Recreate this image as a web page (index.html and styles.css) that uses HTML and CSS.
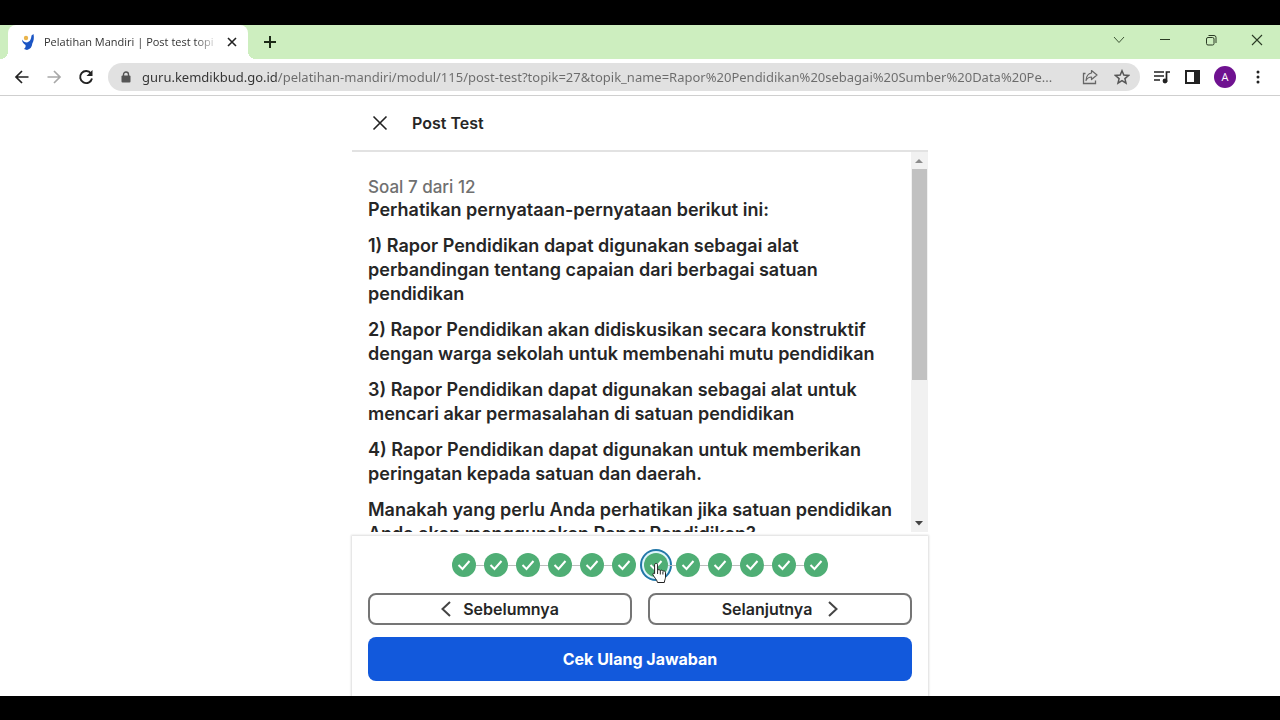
FILE: index.html
```html
<!DOCTYPE html>
<html lang="id">
<head>
<meta charset="utf-8">
<title>Pelatihan Mandiri | Post test topik</title>
<link rel="stylesheet" href="styles.css">
</head>
<body>
<header class="browser">
  <div class="tab-strip">
    <div class="tab">
      <svg class="favicon" width="16" height="18" viewBox="0 0 16 18"><circle cx="6" cy="5" r="2.200" fill="#e9b44c"/><path d="M2 6.500c1 2 3 3 5 3 3-1 4-3 4.500-7L13.500 1c.8 4 .3 7-1.200 9.500-.3 3.500-1.800 5.500-5.300 6.500l-3-1c1-1 2-2 1.500-4C3.500 11 2 9 2 6.500z" fill="#1b55c4"/></svg>
      <span class="tab-title">Pelatihan Mandiri | Post test topi</span>
      <button class="icon-button tab-close" aria-label="Tutup tab"><svg width="10" height="10" viewBox="0 0 10 10"><path d="M1 1l8 8M9 1L1 9" stroke="#222" stroke-width="1.600"/></svg></button>
    </div>
    <button class="icon-button new-tab" aria-label="Tab baru"><svg width="12" height="12" viewBox="0 0 12 12"><path d="M6 0v12M0 6h12" stroke="#1c2a17" stroke-width="2"/></svg></button>
    <div class="window-controls">
      <button class="icon-button" aria-label="Cari tab"><svg width="12" height="12" viewBox="0 0 12 12"><path d="M1 3l5 5.500L11 3" fill="none" stroke="#3d5535"/></svg></button>
      <button class="icon-button" aria-label="Minimalkan"><svg width="12" height="12" viewBox="0 0 12 12"><path d="M1 5.500h10" stroke="#2b3b25"/></svg></button>
      <button class="icon-button" aria-label="Pulihkan"><svg width="12" height="12" viewBox="0 0 12 12"><rect x="1.500" y="3.500" width="7.500" height="7.500" rx="1.500" fill="none" stroke="#2b3b25"/><path d="M3.500 1.500H9a2 2 0 0 1 2 2V9" fill="none" stroke="#2b3b25"/></svg></button>
      <button class="icon-button" aria-label="Tutup"><svg width="12" height="12" viewBox="0 0 12 12"><path d="M1 1l10 10M11 1L1 11" stroke="#2b3b25" stroke-width="1.100"/></svg></button>
    </div>
  </div>
  <div class="toolbar">
    <div class="nav-buttons">
      <button class="icon-button" aria-label="Kembali"><svg width="16" height="16" viewBox="0 0 16 16"><path d="M14.500 8H2.500M8 2L2 8l6 6" fill="none" stroke="#222" stroke-width="1.700"/></svg></button>
      <button class="icon-button" aria-label="Maju"><svg width="16" height="16" viewBox="0 0 16 16"><path d="M1.500 8h12M8 2l6 6-6 6" fill="none" stroke="#a8a8a8" stroke-width="1.700"/></svg></button>
      <button class="icon-button" aria-label="Muat ulang"><svg width="16" height="16" viewBox="0 0 16 16"><path d="M13 4.500A6 6 0 1 0 14 9.500" fill="none" stroke="#222" stroke-width="1.900"/><path d="M14.500 1v6h-6z" fill="#222"/></svg></button>
    </div>
    <div class="omnibox">
      <svg width="10" height="12" viewBox="0 0 10 12"><path d="M2.500 5V3.500a2.500 2.500 0 0 1 5 0V5" fill="none" stroke="#555" stroke-width="1.400"/><rect x="0.500" y="4.500" width="9" height="7" rx="1" fill="#555"/></svg>
      <input class="url" type="text" aria-label="Alamat" value="guru.kemdikbud.go.id/pelatihan-mandiri/modul/115/post-test?topik=27&amp;topik_name=Rapor%20Pendidikan%20sebagai%20Sumber%20Data%20Pe...">
      <button class="icon-button" aria-label="Bagikan"><svg width="16" height="16" viewBox="0 0 16 16"><path d="M3.500 4.500h-2v10h12v-3" fill="none" stroke="#666" stroke-width="1.300"/><path d="M9.500 1.500l5.500 4.500-5.500 4.500V8C7 8 5.300 9 4 11.500 4.300 7.500 6 4.500 9.500 4z" fill="none" stroke="#666" stroke-width="1.200" stroke-linejoin="round"/></svg></button>
      <button class="icon-button" aria-label="Tandai"><svg width="16" height="16" viewBox="0 0 16 16"><path d="M8 1.800l1.800 4.300 4.700.4-3.600 3.100 1.100 4.600-4-2.500-4 2.500 1.100-4.600L1.500 6.500l4.700-.4z" fill="none" stroke="#555" stroke-width="1.500"/></svg></button>
    </div>
    <div class="tool-buttons">
      <button class="icon-button" aria-label="Kontrol media"><svg width="16" height="16" viewBox="0 0 16 16"><path d="M0 3h10M0 7h10M0 11h6M12.500 13V3H16" fill="none" stroke="#222" stroke-width="1.700"/><circle cx="11" cy="12" r="2.400" fill="#222"/></svg></button>
      <button class="icon-button" aria-label="Panel samping"><svg width="16" height="16" viewBox="0 0 16 16"><rect x="2" y="2" width="13" height="12" fill="none" stroke="#222" stroke-width="2"/><path d="M10 2h5v12h-5z" fill="#222"/></svg></button>
      <button class="avatar" aria-label="Profil A">A</button>
      <button class="icon-button" aria-label="Menu"><svg width="16" height="16" viewBox="0 0 16 16"><circle cx="8" cy="3" r="1.500" fill="#222"/><circle cx="8" cy="8" r="1.500" fill="#222"/><circle cx="8" cy="13" r="1.500" fill="#222"/></svg></button>
    </div>
  </div>
</header>
<main class="viewport">
  <div class="card">
    <div class="card-header">
      <button class="icon-button" aria-label="Tutup tes"><svg width="16" height="16" viewBox="0 0 16 16"><path d="M1.500 1.500l13 13M14.500 1.500l-13 13" stroke="#222" stroke-width="1.600"/></svg></button>
      <h1 class="card-title">Post Test</h1>
    </div>
    <div class="card-body">
      <section class="question">
        <div class="counter">Soal 7 dari 12</div>
        <p>Perhatikan pernyataan-pernyataan berikut ini:</p>
        <p>1) Rapor Pendidikan dapat digunakan sebagai alat perbandingan tentang capaian dari berbagai satuan pendidikan</p>
        <p>2) Rapor Pendidikan akan didiskusikan secara konstruktif dengan warga sekolah untuk membenahi mutu pendidikan</p>
        <p>3) Rapor Pendidikan dapat digunakan sebagai alat untuk mencari akar permasalahan di satuan pendidikan</p>
        <p>4) Rapor Pendidikan dapat digunakan untuk memberikan peringatan kepada satuan dan daerah.</p>
        <p>Manakah yang perlu Anda perhatikan jika satuan pendidikan Anda akan menggunakan Rapor Pendidikan?</p>
      </section>
      <div class="scrollbar" aria-hidden="true">
        <svg width="16" height="17" viewBox="0 0 16 17"><path d="M4 11l4-4 4 4z" fill="#8c8c8c"/></svg>
        <div class="track"><div class="thumb"></div></div>
        <svg width="16" height="17" viewBox="0 0 16 17"><path d="M4 6l4 4.500L12 6z" fill="#444"/></svg>
      </div>
    </div>
    <footer class="card-footer">
      <ol class="steps">
        <li class="step"><svg width="24" height="24" viewBox="0 0 24 24"><path d="M6.500 12l4 4 7-8" /></svg></li>
        <li class="step"><svg width="24" height="24" viewBox="0 0 24 24"><path d="M6.500 12l4 4 7-8" /></svg></li>
        <li class="step"><svg width="24" height="24" viewBox="0 0 24 24"><path d="M6.500 12l4 4 7-8" /></svg></li>
        <li class="step"><svg width="24" height="24" viewBox="0 0 24 24"><path d="M6.500 12l4 4 7-8" /></svg></li>
        <li class="step"><svg width="24" height="24" viewBox="0 0 24 24"><path d="M6.500 12l4 4 7-8" /></svg></li>
        <li class="step"><svg width="24" height="24" viewBox="0 0 24 24"><path d="M6.500 12l4 4 7-8" /></svg></li>
        <li class="step current" aria-current="step"><svg width="24" height="24" viewBox="0 0 24 24"><path d="M6.500 12l4 4 7-8" /></svg>
          <svg class="cursor" width="16" height="22" viewBox="0 0 16 22"><path d="M4 1.500c1 0 1.600.6 1.600 1.500v5.500c.3-1.300 2.500-1.200 2.700.3.500-1 2.400-.8 2.600.6.700-.8 2.600-.5 2.600 1.300v4.500c0 1.700-1 3-1.200 5.300H5.500C5 18 2.500 15.500 1 13c-.8-1.300.7-2.300 1.600-1.400V3c0-.9.500-1.500 1.400-1.500z"/><path d="M5.600 8.500V12M8.300 9v3.500M10.900 10v2.500"/></svg></li>
        <li class="step"><svg width="24" height="24" viewBox="0 0 24 24"><path d="M6.500 12l4 4 7-8" /></svg></li>
        <li class="step"><svg width="24" height="24" viewBox="0 0 24 24"><path d="M6.500 12l4 4 7-8" /></svg></li>
        <li class="step"><svg width="24" height="24" viewBox="0 0 24 24"><path d="M6.500 12l4 4 7-8" /></svg></li>
        <li class="step"><svg width="24" height="24" viewBox="0 0 24 24"><path d="M6.500 12l4 4 7-8" /></svg></li>
        <li class="step"><svg width="24" height="24" viewBox="0 0 24 24"><path d="M6.500 12l4 4 7-8" /></svg></li>
      </ol>
      <div class="pager">
        <button class="outline-button"><svg width="12" height="16" viewBox="0 0 12 16"><path d="M9 1L1.500 8 9 15" /></svg>Sebelumnya</button>
        <button class="outline-button">Selanjutnya<svg width="16" height="16" viewBox="0 0 16 16"><path d="M7 1l7.500 7L7 15" /></svg></button>
      </div>
      <button class="primary-button">Cek Ulang Jawaban</button>
    </footer>
  </div>
</main>
</body>
</html>
```
FILE: styles.css
```css
* { box-sizing: border-box; }

body {
  margin: 0;
  height: 100vh;
  padding: 25px 0 24px;
  display: flex;
  flex-direction: column;
  background: #000;
  color: #262626;
  font-family: Inter, "Liberation Sans", sans-serif;
}

button { font-family: inherit; cursor: pointer; }

svg { display: block; flex: none; }

.icon-button {
  display: flex;
  align-items: center;
  justify-content: center;
  padding: 0;
  border: 0;
  background: none;
}

/* Browser chrome */
.browser {
  font-family: "Open Sans", "Noto Sans", sans-serif;
  background: #fff;
  border-bottom: 1px solid #cfcfcf;
}

.tab-strip {
  display: flex;
  align-items: center;
  height: 34px;
  padding-left: 8px;
  background: #cdeebf;
}

.tab {
  position: relative;
  display: flex;
  align-items: center;
  align-self: stretch;
  width: 240px;
  padding: 0 11px 0 12px;
  border-radius: 8px 8px 0 0;
  background: #fff;
}

/* Curved feet that join the tab to the toolbar */
.tab::before,
.tab::after {
  content: "";
  position: absolute;
  bottom: 0;
  width: 8px;
  height: 8px;
}

.tab::before {
  right: 100%;
  background: radial-gradient(circle at 0 0, transparent 8px, #fff 8px);
}

.tab::after {
  left: 100%;
  background: radial-gradient(circle at 100% 0, transparent 8px, #fff 8px);
}

.tab-title {
  flex: 1;
  min-width: 0;
  margin: 0 8px;
  overflow: hidden;
  white-space: nowrap;
  font-size: 11px;
  line-height: 16px;
  color: #333;
  mask-image: linear-gradient(to right, #000 86%, transparent);
}

.new-tab { margin-left: 16px; }

.window-controls {
  display: flex;
  gap: 34px;
  margin: 0 17px 4px auto;
}

.toolbar {
  display: flex;
  align-items: center;
  height: 36px;
  padding: 0 14px;
}

.nav-buttons { display: flex; gap: 16px; margin-right: 14px; }

.omnibox {
  flex: 1;
  min-width: 0;
  display: flex;
  align-items: center;
  gap: 16px;
  height: 28px;
  padding: 0 10px 0 13px;
  border-radius: 14px;
  background: #e1e1e1;
}

.url {
  flex: 1;
  min-width: 0;
  margin: 0 -4px 0 -5px;
  padding: 0;
  border: 0;
  font-family: "Noto Sans", sans-serif;
  font-size: 13px;
  line-height: 20px;
  color: #6b6b6b;
  background: linear-gradient(to right, #333 136px, #6b6b6b 136px);
  background-clip: text;
  -webkit-text-fill-color: transparent;
}

.tool-buttons {
  display: flex;
  align-items: center;
  gap: 14px;
  margin-left: 14px;
}

.avatar {
  width: 22px;
  height: 22px;
  padding: 0;
  border: 0;
  border-radius: 50%;
  background: #6f1290;
  color: #fff;
  font-size: 11px;
  line-height: 22px;
}

/* Test page */
.viewport {
  flex: 1;
  min-height: 0;
  display: flex;
  justify-content: center;
  background: #fff;
}

.card {
  display: flex;
  flex-direction: column;
  width: 100%;
  max-width: 576px;
}

.card-header {
  display: flex;
  align-items: center;
  gap: 24px;
  padding: 15px 20px;
  border-bottom: 2px solid #e2e2e2;
}

.card-title {
  margin: 0;
  font-size: 16px;
  line-height: 24px;
  font-weight: 600;
}

.card-body {
  flex: 1;
  min-height: 0;
  display: flex;
}

.question {
  flex: 1;
  padding: 24px 16px 0;
  overflow: hidden;
  font-size: 18px;
  line-height: 24px;
  font-weight: 600;
}

.question p { margin: 0 0 12px; }

.counter {
  font-size: 17px;
  line-height: 22px;
  font-weight: 500;
  color: #707070;
}

.scrollbar {
  display: flex;
  flex-direction: column;
  width: 17px;
  background: #f1f1f1;
}

.track { flex: 1; padding: 0 1px; }

.thumb { height: 61%; background: #c1c1c1; }

.card-footer {
  display: flex;
  flex-direction: column;
  margin-top: 4px;
  padding: 17px 16px 15px;
  box-shadow: 0 0 2px 1px #dcdcdc;
  clip-path: inset(-4px -4px 0);
}

.steps {
  display: flex;
  justify-content: center;
  gap: 8px;
  margin: 0 0 16px;
  padding: 0;
  list-style: none;
}

.step {
  position: relative;
  border-radius: 50%;
  background: #4fae75;
}

.step path {
  fill: none;
  stroke: #fff;
  stroke-width: 2;
}

.step + .step::before {
  content: "";
  position: absolute;
  top: 12px;
  right: 100%;
  width: 8px;
  height: 1px;
  background: #bdbdbd;
}

.step.current { box-shadow: 0 0 0 2px #dff6fb, 0 0 0 4px #2277a8; }

.step.current::before { display: none; }

.step .cursor {
  position: absolute;
  top: 9px;
  left: 8px;
}

.cursor path { stroke: #222; stroke-width: 1; }

.cursor path:first-child { fill: #fff; }

.pager {
  display: grid;
  grid-template-columns: 1fr 1fr;
  gap: 16px;
  margin-bottom: 12px;
}

.outline-button {
  display: flex;
  align-items: center;
  justify-content: center;
  gap: 10px;
  height: 32px;
  padding: 0;
  border: 2px solid #757575;
  border-radius: 8px;
  background: #fff;
  color: #262626;
  font-size: 16px;
  line-height: 24px;
  font-weight: 600;
}

.outline-button path {
  fill: none;
  stroke: #444;
  stroke-width: 2;
}

.primary-button {
  height: 44px;
  padding: 0;
  border: 0;
  border-radius: 8px;
  background: #1259dc;
  color: #fff;
  font-size: 16px;
  line-height: 24px;
  font-weight: 700;
}
```
